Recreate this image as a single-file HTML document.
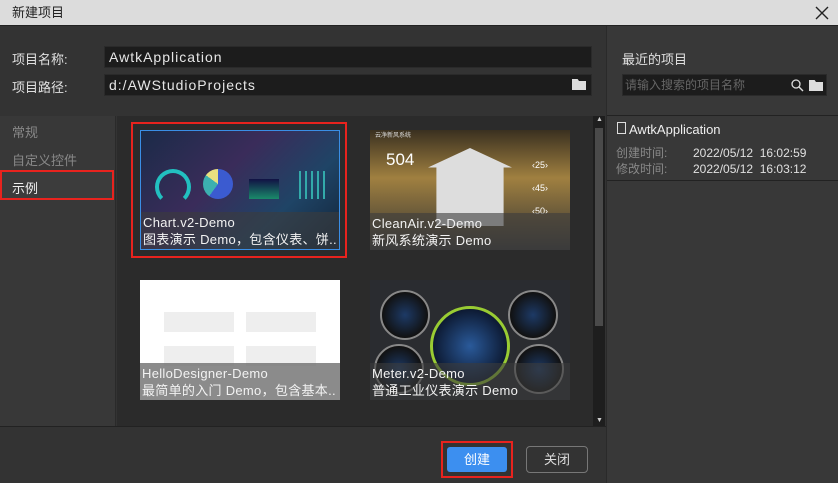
<!DOCTYPE html>
<html><head><meta charset="utf-8"><style>
*{margin:0;padding:0;box-sizing:border-box}
body{width:838px;height:483px;background:#333;font-family:"Liberation Sans","Noto Sans CJK SC",sans-serif;color:#ddd;position:relative;overflow:hidden;font-size:13px}
.a{position:absolute}
.title{left:0;top:0;width:838px;height:26px;background:#dcdcdc;color:#222;font-size:13px;line-height:26px;padding-left:12px;border-bottom:1px solid #222}
.inp{background:#1c1c1c;border:1px solid #2a2a2a;color:#e6e6e6;font-size:14px;letter-spacing:1px;line-height:20px;padding-left:4px}
.lbl{font-size:13px;color:#e0e0e0}
.thumb{width:200px;height:120px;overflow:hidden}
.cap{position:absolute;left:0;bottom:0;width:100%;height:37px;background:rgba(60,60,60,.6);color:#f2f2f2;font-size:13px;line-height:17px;padding:2px 0 0 2px;white-space:nowrap;letter-spacing:.3px}
.fold{width:14px;height:11px;background:#ddd;clip-path:polygon(0 0,40% 0,50% 18%,100% 18%,100% 100%,0 100%)}
</style></head><body>
<div class="a title">新建项目</div>
<svg class="a" style="left:815px;top:6px" width="14" height="14"><path d="M1 1L13 13M13 1L1 13" stroke="#222" stroke-width="1.4"/></svg>
<div class="a lbl" style="left:12px;top:49px">项目名称:</div>
<div class="a lbl" style="left:12px;top:77px">项目路径:</div>
<div class="a inp" style="left:104px;top:46px;width:488px;height:22px">AwtkApplication</div>
<div class="a inp" style="left:104px;top:74px;width:488px;height:22px">d:/AWStudioProjects</div>
<div class="a fold" style="left:572px;top:79px"></div>
<!-- left nav -->
<div class="a" style="left:0;top:116px;width:116px;height:310px;background:#383838;border-right:1px solid #2a2a2a"></div>
<div class="a" style="left:12px;top:122px;color:#888">常规</div>
<div class="a" style="left:12px;top:150px;color:#888">自定义控件</div>
<div class="a" style="left:0;top:170px;width:114px;height:30px;border:2px solid #e8231e;background:#3c3c3c"></div>
<div class="a" style="left:12px;top:178px;color:#eee">示例</div>
<!-- gallery -->
<div class="a" style="left:117px;top:116px;width:488px;height:310px;background:#2b2b2b"></div>
<div class="a" style="left:593px;top:116px;width:12px;height:310px;background:#1e1e1e"></div>
<div class="a" style="left:595px;top:128px;width:8px;height:198px;background:#4a4a4a"></div>
<div class="a" style="left:596px;top:116px;color:#ccc;font-size:7px">▲</div>
<div class="a" style="left:596px;top:417px;color:#ccc;font-size:7px">▼</div>
<div class="a" style="left:131px;top:122px;width:216px;height:136px;border:2px solid #e8231e"></div>
<div class="a thumb" style="left:140px;top:130px;background:linear-gradient(135deg,#1b2b48,#3a2c5a 40%,#1f4466 70%,#122438);border:1px solid #3a8ee6">
 <div class="a" style="left:14px;top:38px;width:36px;height:36px;border-radius:50%;border:4px solid #22c0c0;border-bottom-color:transparent"></div>
 <div class="a" style="left:62px;top:38px;width:30px;height:30px;border-radius:50%;background:conic-gradient(#3b5bd0 0 60%,#3cb0b0 0 85%,#e8e080 0)"></div>
 <div class="a" style="left:108px;top:48px;width:30px;height:20px;background:linear-gradient(#114,#1a8a6a)"></div>
 <div class="a" style="left:158px;top:40px;width:26px;height:28px;background:repeating-linear-gradient(90deg,#3aa 0 2px,transparent 2px 6px)"></div>
 <div class="cap">Chart.v2-Demo<br>图表演示 Demo，包含仪表、饼..</div></div>
<div class="a thumb" style="left:370px;top:130px;background:linear-gradient(180deg,#3a3020,#a08040 40%,#6a5a3a 70%,#3a3a3a)">
 <div class="a" style="left:5px;top:0;font-size:6px;color:#ddd">云净新风系统</div>
 <div class="a" style="left:16px;top:20px;font-size:17px;color:#fff">504</div>
 <div class="a" style="left:58px;top:18px;width:84px;height:78px;background:#ddd;clip-path:polygon(50% 0,100% 25%,90% 25%,90% 100%,10% 100%,10% 25%,0 25%)"></div>
 <div class="a" style="left:162px;top:24px;width:30px;height:70px;color:#fff;font-size:9px;line-height:23px">‹25›<br>‹45›<br>‹50›</div>
 <div class="cap">CleanAir.v2-Demo<br>新风系统演示 Demo</div></div>
<div class="a thumb" style="left:140px;top:280px;background:#fff">
 <div class="a" style="left:24px;top:32px;width:70px;height:20px;background:#eee"></div>
 <div class="a" style="left:106px;top:32px;width:70px;height:20px;background:#eee"></div>
 <div class="a" style="left:24px;top:66px;width:70px;height:20px;background:#eee"></div>
 <div class="a" style="left:106px;top:66px;width:70px;height:20px;background:#eee"></div>
 <div class="cap" style="background:rgba(110,110,110,.8)">HelloDesigner-Demo<br>最简单的入门 Demo，包含基本..</div></div>
<div class="a thumb" style="left:370px;top:280px;background:#2a2c30">
 <div class="a" style="left:10px;top:10px;width:50px;height:50px;border-radius:50%;background:radial-gradient(#1d3a66,#111 70%);border:2px solid #888"></div>
 <div class="a" style="left:138px;top:10px;width:50px;height:50px;border-radius:50%;background:radial-gradient(#1d3a66,#111 70%);border:2px solid #888"></div>
 <div class="a" style="left:60px;top:26px;width:80px;height:80px;border-radius:50%;background:radial-gradient(#2a5a9a,#0d1a33 70%);border:3px solid #9c3"></div>
 <div class="a" style="left:4px;top:64px;width:50px;height:50px;border-radius:50%;background:radial-gradient(#1d3a66,#111 70%);border:2px solid #888"></div>
 <div class="a" style="left:144px;top:64px;width:50px;height:50px;border-radius:50%;background:radial-gradient(#1d3a66,#111 70%);border:2px solid #888"></div>
 <div class="cap">Meter.v2-Demo<br>普通工业仪表演示 Demo</div></div>
<!-- right -->
<div class="a" style="left:606px;top:26px;width:232px;height:457px;background:#383838;border-left:1px solid #2a2a2a"></div>
<div class="a lbl" style="left:622px;top:49px">最近的项目</div>
<div class="a" style="left:622px;top:74px;width:205px;height:22px;background:#1c1c1c;border:1px solid #2a2a2a;color:#666;font-size:12px;line-height:20px;padding-left:2px">请输入搜索的项目名称</div>
<svg class="a" style="left:791px;top:79px" width="13" height="13"><circle cx="5" cy="5" r="4" fill="none" stroke="#ddd" stroke-width="1.3"/><path d="M8 8L12 12" stroke="#ddd" stroke-width="1.4"/></svg>
<div class="a fold" style="left:809px;top:80px"></div>
<div class="a" style="left:607px;top:115px;width:231px;height:1px;background:#222"></div>
<div class="a" style="left:617px;top:122px;width:9px;height:12px;border:1px solid #ddd"></div>
<div class="a" style="left:629px;top:122px;color:#eee;font-size:13px">AwtkApplication</div>
<div class="a" style="left:616px;top:145px;color:#888;font-size:12px;line-height:16px">创建时间:<br>修改时间:</div>
<div class="a" style="left:693px;top:145px;color:#e0e0e0;font-size:12px;line-height:16px;white-space:pre">2022/05/12  16:02:59
2022/05/12  16:03:12</div>
<div class="a" style="left:607px;top:180px;width:231px;height:1px;background:#222"></div>
<!-- bottom -->
<div class="a" style="left:0;top:426px;width:606px;height:1px;background:#222"></div>
<div class="a" style="left:441px;top:441px;width:72px;height:37px;border:2px solid #e8231e"></div>
<div class="a" style="left:447px;top:447px;width:60px;height:25px;background:#3c8ff0;border-radius:3px;color:#fff;text-align:center;line-height:25px">创建</div>
<div class="a" style="left:526px;top:446px;width:62px;height:27px;border:1px solid #777;border-radius:4px;color:#ddd;text-align:center;line-height:25px">关闭</div>
</body></html>
